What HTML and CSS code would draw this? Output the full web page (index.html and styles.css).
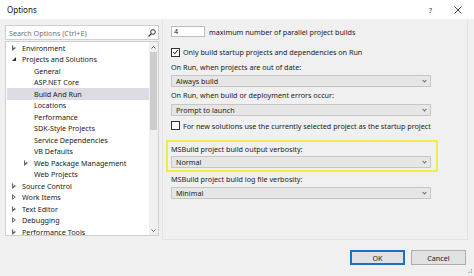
FILE: index.html
```html
<!DOCTYPE html>
<html lang="en">
<head>
<meta charset="UTF-8">
<meta name="viewport" content="width=device-width, initial-scale=1.0">
<title>Options</title>
<link rel="stylesheet" href="styles.css">
</head>
<body>
<div class="window">
  <div class="titlebar">
    <span class="title">Options</span>
    <span class="help">?</span>
    <svg class="close" width="8" height="8" viewBox="0 0 8 8"><path d="M0.5 0.5L7.5 7.5M7.5 0.5L0.5 7.5" stroke="#333" stroke-width="0.9" fill="none"/></svg>
  </div>
  <div class="main">
    <div class="left">
      <div class="search">
        <span>Search Options (Ctrl+E)</span>
        <svg width="8" height="8" viewBox="0 0 8 8"><circle cx="5" cy="3" r="2.3" stroke="#333" stroke-width="1" fill="none"/><path d="M3.3 4.7L0.6 7.4" stroke="#333" stroke-width="1.3"/></svg>
      </div>
      <div class="tree">
        <div class="items">
          <div class="node"><span class="arrow closed"></span>Environment</div>
          <div class="node"><span class="arrow open"></span>Projects and Solutions</div>
          <div class="node sub"><span class="arrow"></span>General</div>
          <div class="node sub"><span class="arrow"></span>ASP.NET Core</div>
          <div class="node sub selected"><span class="arrow"></span>Build And Run</div>
          <div class="node sub"><span class="arrow"></span>Locations</div>
          <div class="node sub"><span class="arrow"></span>Performance</div>
          <div class="node sub"><span class="arrow"></span>SDK-Style Projects</div>
          <div class="node sub"><span class="arrow"></span>Service Dependencies</div>
          <div class="node sub"><span class="arrow"></span>VB Defaults</div>
          <div class="node sub"><span class="arrow closed"></span>Web Package Management</div>
          <div class="node sub"><span class="arrow"></span>Web Projects</div>
          <div class="node"><span class="arrow closed"></span>Source Control</div>
          <div class="node"><span class="arrow closed"></span>Work Items</div>
          <div class="node"><span class="arrow closed"></span>Text Editor</div>
          <div class="node"><span class="arrow closed"></span>Debugging</div>
          <div class="node"><span class="arrow closed"></span>Performance Tools</div>
        </div>
        <div class="scroll">
          <div class="btn"><svg width="5" height="3" viewBox="0 0 5 3"><path d="M0.5 2.5L2.5 0.5L4.5 2.5" stroke="#555" stroke-width="0.9" fill="none"/></svg></div>
          <div class="thumb"></div>
          <div class="track"></div>
          <div class="btn"><svg width="5" height="3" viewBox="0 0 5 3"><path d="M0.5 0.5L2.5 2.5L4.5 0.5" stroke="#555" stroke-width="0.9" fill="none"/></svg></div>
        </div>
      </div>
    </div>
    <div class="panel">
      <div class="row first">
        <div class="num">4</div>
        <span>maximum number of parallel project builds</span>
      </div>
      <div class="row check">
        <div class="box"><svg width="8" height="8" viewBox="0 0 8 8"><path d="M1.5 4L3.3 6L6.6 1.6" stroke="#111" stroke-width="1.1" fill="none"/></svg></div>
        <span>Only build startup projects and dependencies on Run</span>
      </div>
      <div class="label l1">On Run, when projects are out of date:</div>
      <div class="combo">Always build<i></i></div>
      <div class="label l2">On Run, when build or deployment errors occur:</div>
      <div class="combo">Prompt to launch<i></i></div>
      <div class="row check c2">
        <div class="box"></div>
        <span>For new solutions use the currently selected project as the startup project</span>
      </div>
      <div class="mark">
        <div class="label l3">MSBuild project build output verbosity:</div>
        <div class="combo">Normal<i></i></div>
      </div>
      <div class="label l4">MSBuild project build log file verbosity:</div>
      <div class="combo">Minimal<i></i></div>
    </div>
  </div>
  <div class="footer">
    <button class="default">OK</button>
    <button>Cancel</button>
    <svg class="grip" width="4" height="4" viewBox="0 0 4 4"><rect x="3" y="0" width="1" height="1" fill="#aaa"/><rect x="1.5" y="1.5" width="1" height="1" fill="#aaa"/><rect x="3" y="1.5" width="1" height="1" fill="#aaa"/><rect x="0" y="3" width="1" height="1" fill="#aaa"/><rect x="1.5" y="3" width="1" height="1" fill="#aaa"/><rect x="3" y="3" width="1" height="1" fill="#aaa"/></svg>
  </div>
</div>
</body>
</html>
```

FILE: styles.css
```css
body {
  margin: 0;
  padding: 0;
  font-family: "Noto Sans", sans-serif;
  font-size: 7.2px;
  color: #1a1a1a;
  background: #f0f0f0;
}
.window {
  width: 474px;
  height: 276px;
  display: flex;
  flex-direction: column;
  background: #f0f0f0;
}
.titlebar {
  height: 19px;
  background: #fff;
  display: flex;
  align-items: center;
  position: relative;
}
.title {
  margin-left: 7px;
  font-size: 8px;
  color: #111;
}
.help {
  margin-left: auto;
  margin-right: 22px;
  font-size: 7.5px;
  color: #333;
}
.close {
  margin-right: 12px;
}
.main {
  height: 221px;
  display: flex;
}
.left {
  width: 154px;
  margin-left: 5px;
}
.search {
  margin-top: 6px;
  height: 13px;
  background: #fff;
  border: 1px solid #cfcfcf;
  display: flex;
  align-items: center;
  justify-content: space-between;
  padding: 0 2px 0 3px;
  color: #707070;
}
.tree {
  margin-top: 1px;
  height: 193px;
  background: #fff;
  border: 1px solid #cfcfcf;
  display: flex;
  overflow: hidden;
}
.items {
  flex: 1;
}
.node {
  height: 11.5px;
  display: flex;
  align-items: center;
  padding-left: 6px;
  white-space: nowrap;
}
.node.sub {
  padding-left: 18px;
}
.node.selected {
  background: #dcdce4;
  margin-left: 1px;
  padding-left: 17px;
}
.arrow {
  width: 10px;
  height: 6px;
  flex: none;
  position: relative;
}
.arrow.closed::before {
  content: "";
  position: absolute;
  left: 0;
  top: 0;
  border-left: 4px solid #666;
  border-top: 3px solid transparent;
  border-bottom: 3px solid transparent;
}
.arrow.closed::after {
  content: "";
  position: absolute;
  left: 1px;
  top: 1.5px;
  border-left: 2px solid #fff;
  border-top: 1.5px solid transparent;
  border-bottom: 1.5px solid transparent;
}
.arrow.open::before {
  content: "";
  position: absolute;
  left: 0;
  top: 1px;
  border-right: 4px solid #333;
  border-top: 4px solid transparent;
}
.scroll {
  width: 9px;
  display: flex;
  flex-direction: column;
  background: #f0f0f0;
}
.scroll .btn {
  height: 10px;
  display: flex;
  align-items: center;
  justify-content: center;
}
.thumb {
  height: 78px;
  margin: 0 1px;
  background: #cdcdcd;
}
.track {
  flex: 1;
}
.panel {
  flex: 1;
  margin-left: 3px;
  margin-right: 6px;
  border: 1px solid #e4e4e4;
  border-top: none;
  padding-left: 8px;
}
.row {
  display: flex;
  align-items: center;
  white-space: nowrap;
}
.row.first {
  margin-top: 7px;
  height: 11px;
}
.num {
  width: 30px;
  height: 9px;
  background: #fff;
  border: 1px solid #bdbdbd;
  padding-left: 2px;
  line-height: 9px;
  margin-right: 4px;
}
.row.check {
  margin-top: 10px;
  height: 10px;
}
.box {
  width: 7px;
  height: 7px;
  border: 1px solid #333;
  background: #fff;
  margin-right: 3px;
  display: flex;
  align-items: center;
  justify-content: center;
}
.row.c2 {
  margin-top: 5px;
}
.label {
  height: 10px;
  line-height: 10px;
  white-space: nowrap;
}
.l1 {
  margin-top: 4.5px;
}
.l2 {
  margin-top: 3px;
}
.l3 {
  margin-top: 2px;
}
.l4 {
  margin-top: 2px;
}
.combo {
  width: 254px;
  height: 10px;
  line-height: 10px;
  margin-top: 3.5px;
  padding-left: 4px;
  background: #e6e6e6;
  border: 1px solid #c6c6c6;
  position: relative;
}
.combo i {
  position: absolute;
  right: 4px;
  top: 3px;
  width: 2px;
  height: 2px;
  border-right: 1px solid #666;
  border-bottom: 1px solid #666;
  transform: rotate(45deg);
}
.mark {
  margin-top: 9px;
  margin-left: -5px;
  width: 265px;
  height: 28px;
  border: 2px solid #f2ec44;
  padding-left: 3px;
}
.mark .combo {
  margin-top: 2.5px;
}
.footer {
  flex: 1;
  display: flex;
  justify-content: flex-end;
  align-items: flex-start;
  padding-top: 10px;
  padding-right: 8px;
  position: relative;
}
button {
  width: 55px;
  height: 15px;
  margin-left: 6px;
  padding: 0;
  font-family: "Noto Sans", sans-serif;
  font-size: 7.2px;
  color: #1a1a1a;
  background: #e1e1e1;
  border: 1px solid #adadad;
}
button.default {
  border: 1px solid #1f6fbf;
  box-shadow: inset 0 0 0 1px #1f6fbf;
}
.grip {
  position: absolute;
  right: 2px;
  bottom: 3px;
}
```
